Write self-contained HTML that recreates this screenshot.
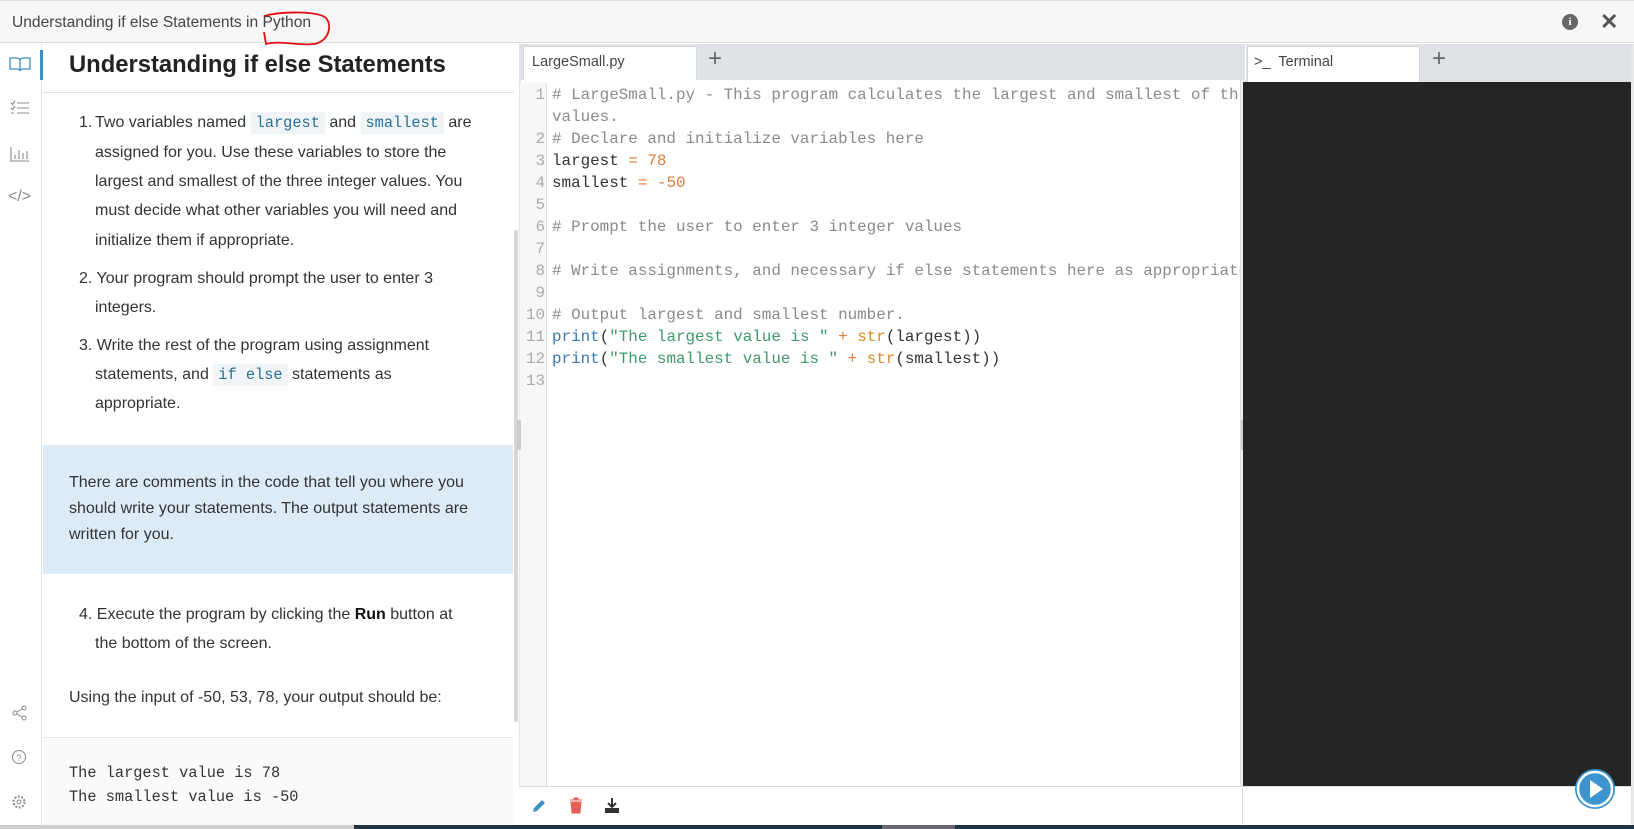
<!DOCTYPE html>
<html><head><meta charset="utf-8"><style>
*{margin:0;padding:0;box-sizing:border-box}
body{width:1634px;height:829px;overflow:hidden;background:#fff;font-family:"Liberation Sans",sans-serif;color:#333;position:relative}
.a{position:absolute}
.mono{font-family:"Liberation Mono",monospace}
.t{font-size:16px;color:#333;white-space:nowrap}
code.c{font-family:"Liberation Mono",monospace;background:#f1f4f6;color:#2a6f97;padding:2px 5px;font-size:15.3px}
.ln{position:absolute;left:0;width:25px;text-align:right;color:#aaa}
.cl{position:absolute;left:32px;white-space:pre;color:#333}
.cm{color:#8a8a8a}.nu{color:#e07a3a}.pr{color:#3a78ad}.st{color:#3e9a6a}.fn{color:#d98a2b}
</style></head><body>
<div class="a" style="left:0;top:0;width:1634px;height:43px;background:#f7f7f7;border-top:1px solid #ddd;border-bottom:1px solid #ddd"></div>
<div class="a t" style="left:12px;top:14px;font-size:15.6px;color:#444">Understanding if else Statements in Python</div>
<svg class="a" style="left:258px;top:8px" width="76" height="40"><path d="M6 8 C25 3 60 3 68 10 C75 18 70 34 56 36 C40 38 22 32 8 36 L6 24" fill="none" stroke="#e01010" stroke-width="1.8"/></svg>
<div class="a" style="left:1562px;top:14px;width:16px;height:16px;border-radius:50%;background:#666;color:#fff;font:bold 11px 'Liberation Serif',serif;text-align:center;line-height:16px">i</div>
<div class="a" style="left:1600px;top:9px;font:bold 22px 'Liberation Sans',sans-serif;color:#555">✕</div>

<div class="a" style="left:0;top:44px;width:42px;height:785px;background:#fff;border-right:1px solid #e5e5e5"></div>
<div class="a" style="left:40px;top:50px;width:3px;height:30px;background:#3d8fc6"></div>
<svg class="a" style="left:9px;top:56px" width="22" height="16"><path d="M1 2h7c1.5 0 3 1 3 2.5V15c0-1-1.5-2-3-2H1zM21 2h-7c-1.5 0-3 1-3 2.5V15c0-1 1.5-2 3-2h7z" fill="none" stroke="#3d8fc6" stroke-width="1.3"/></svg>
<svg class="a" style="left:10px;top:100px" width="20" height="16"><path d="M7 3h12M7 8h12M7 13h12M1 3l1.5 1.5L5 1M1 8l1.5 1.5L5 6M1 13h3" fill="none" stroke="#888" stroke-width="1.1"/></svg>
<svg class="a" style="left:10px;top:146px" width="20" height="16"><path d="M1 1v14h18M5 13V9M9 13V4M13 13V7M17 13V5" fill="none" stroke="#888" stroke-width="1.1"/></svg>
<div class="a" style="left:8px;top:188px;font-size:16px;color:#888">&lt;/&gt;</div>
<svg class="a" style="left:12px;top:705px" width="16" height="16"><circle cx="3" cy="8" r="2" fill="none" stroke="#888"/><circle cx="12" cy="3" r="2" fill="none" stroke="#888"/><circle cx="12" cy="13" r="2" fill="none" stroke="#888"/><path d="M5 7l5-3M5 9l5 3" stroke="#888"/></svg>
<svg class="a" style="left:11px;top:749px" width="16" height="16"><circle cx="8" cy="8" r="6.5" fill="none" stroke="#888"/><text x="8" y="12" font-size="9" text-anchor="middle" fill="#888" font-family="Liberation Sans">?</text></svg>
<svg class="a" style="left:11px;top:794px" width="16" height="16"><circle cx="8" cy="8" r="5.5" fill="none" stroke="#888" stroke-dasharray="2 1.5" stroke-width="2"/><circle cx="8" cy="8" r="2" fill="none" stroke="#888"/></svg>

<div class="a" style="left:43px;top:44px;width:471px;height:49px;border-bottom:1px solid #e3e3e3"></div>
<div class="a" style="left:69px;top:51px;font-size:23.8px;font-weight:bold;color:#222;white-space:nowrap">Understanding if else Statements</div>
<div class="a t" style="left:79px;top:114px">1.</div>
<div class="a t" style="left:95px;top:114px">Two variables named <code class="c">largest</code> and <code class="c">smallest</code> are</div>
<div class="a t" style="left:95px;top:144px">assigned for you. Use these variables to store the</div>
<div class="a t" style="left:95px;top:173px">largest and smallest of the three integer values. You</div>
<div class="a t" style="left:95px;top:202px">must decide what other variables you will need and</div>
<div class="a t" style="left:95px;top:232px">initialize them if appropriate.</div>
<div class="a t" style="left:79px;top:270px">2. Your program should prompt the user to enter 3</div>
<div class="a t" style="left:95px;top:299px">integers.</div>
<div class="a t" style="left:79px;top:337px">3. Write the rest of the program using assignment</div>
<div class="a t" style="left:95px;top:366px">statements, and <code class="c">if else</code> statements as</div>
<div class="a t" style="left:95px;top:395px">appropriate.</div>
<div class="a" style="left:43px;top:445px;width:470px;height:129px;background:#dcebf6"></div>
<div class="a t" style="left:69px;top:474px">There are comments in the code that tell you where you</div>
<div class="a t" style="left:69px;top:500px">should write your statements. The output statements are</div>
<div class="a t" style="left:69px;top:526px">written for you.</div>
<div class="a t" style="left:79px;top:606px">4. Execute the program by clicking the <b style="color:#111">Run</b> button at</div>
<div class="a t" style="left:95px;top:635px">the bottom of the screen.</div>
<div class="a t" style="left:69px;top:689px">Using the input of -50, 53, 78, your output should be:</div>
<div class="a" style="left:43px;top:737px;width:470px;height:92px;background:#fafafa;border-top:1px solid #e6e6e6"></div>
<div class="a mono" style="left:69px;top:761px;font-size:15.3px;color:#333;line-height:24px;white-space:pre">The largest value is 78
The smallest value is -50</div>
<div class="a" style="left:514px;top:230px;width:4px;height:492px;background:#d6d6d6;border-radius:2px"></div>

<div class="a" style="left:519px;top:44px;width:726px;height:36px;background:#dfe3e8"></div>
<div class="a" style="left:523px;top:46px;width:174px;height:34px;background:#fff;border:1px solid #d8d8d8;border-bottom:none;border-radius:3px 3px 0 0"></div>
<div class="a t" style="left:532px;top:54px;font-size:14.5px;color:#444">LargeSmall.py</div>
<div class="a" style="left:708px;top:45px;font-size:24px;color:#666;font-weight:300">+</div>
<div class="a" style="left:519px;top:80px;width:2px;height:707px;background:#e6e6e6"></div>
<div class="a" style="left:520px;top:83px;width:27px;height:704px;background:#f7f7f7;border-right:1px solid #ddd"></div>
<div class="a mono" style="left:520px;top:83px;width:720px;height:704px;font-size:15.9px;line-height:22px;overflow:hidden">
<div style="position:relative;top:1px">
<div class="ln" style="top:0">1</div><div class="cl cm" style="top:0"># LargeSmall.py - This program calculates the largest and smallest of three</div>
<div class="cl cm" style="top:22px">values.</div>
<div class="ln" style="top:44px">2</div><div class="cl cm" style="top:44px"># Declare and initialize variables here</div>
<div class="ln" style="top:66px">3</div><div class="cl" style="top:66px">largest <span class="nu">=</span> <span class="nu">78</span></div>
<div class="ln" style="top:88px">4</div><div class="cl" style="top:88px">smallest <span class="nu">=</span> <span class="nu">-50</span></div>
<div class="ln" style="top:110px">5</div>
<div class="ln" style="top:132px">6</div><div class="cl cm" style="top:132px"># Prompt the user to enter 3 integer values</div>
<div class="ln" style="top:154px">7</div>
<div class="ln" style="top:176px">8</div><div class="cl cm" style="top:176px"># Write assignments, and necessary if else statements here as appropriate</div>
<div class="ln" style="top:198px">9</div>
<div class="ln" style="top:220px">10</div><div class="cl cm" style="top:220px"># Output largest and smallest number.</div>
<div class="ln" style="top:242px">11</div><div class="cl" style="top:242px"><span class="pr">print</span>(<span class="st">"The largest value is "</span> <span class="nu">+</span> <span class="fn">str</span>(largest))</div>
<div class="ln" style="top:264px">12</div><div class="cl" style="top:264px"><span class="pr">print</span>(<span class="st">"The smallest value is "</span> <span class="nu">+</span> <span class="fn">str</span>(smallest))</div>
<div class="ln" style="top:286px">13</div>
</div></div>
<div class="a" style="left:1240px;top:80px;width:6px;height:707px;background:#f0f0f0;border-left:1px solid #ddd;border-right:1px solid #ddd"></div>
<div class="a" style="left:1241px;top:420px;width:4px;height:30px;background:#ccc"></div>
<div class="a" style="left:517px;top:420px;width:4px;height:30px;background:#ccc"></div>

<div class="a" style="left:519px;top:786px;width:1112px;height:43px;background:#fff;border-top:1px solid #ddd"></div>
<div class="a" style="left:1242px;top:786px;width:1px;height:43px;background:#ddd"></div>
<svg class="a" style="left:531px;top:798px" width="16" height="16"><path d="M2 14l1-4 8-8 3 3-8 8z" fill="#3d8fc6"/></svg>
<svg class="a" style="left:569px;top:797px" width="14" height="17"><path d="M1 3h12M5 3V1h4v2M2 5h10l-1 11H3z" fill="#e3605a" stroke="#e3605a"/></svg>
<svg class="a" style="left:604px;top:797px" width="16" height="17"><path d="M8 1v9M4 6l4 4 4-4" stroke="#333" stroke-width="2" fill="none"/><path d="M1 11v5h14v-5" fill="#333"/></svg>

<div class="a" style="left:1246px;top:44px;width:385px;height:38px;background:#dfe3e8"></div>
<div class="a" style="left:1247px;top:46px;width:173px;height:36px;background:#fff;border-radius:3px 3px 0 0;border:1px solid #d8d8d8;border-bottom:none"></div>
<div class="a t" style="left:1254px;top:54px;font-size:14.5px;color:#444">&gt;_&nbsp; Terminal</div>
<div class="a" style="left:1432px;top:45px;font-size:24px;color:#666">+</div>
<div class="a" style="left:1243px;top:82px;width:388px;height:704px;background:#252525"></div>
<div class="a" style="left:1631px;top:44px;width:3px;height:785px;background:#e8e8e8"></div>
<div class="a" style="left:1575px;top:769px;width:40px;height:40px;border-radius:50%;background:#3d94cf"></div>
<svg class="a" style="left:1575px;top:769px" width="40" height="40"><circle cx="20" cy="20" r="17" fill="none" stroke="#fff" stroke-width="2.5"/><path d="M15 11l13 9-13 9z" fill="#fff"/></svg>

<div class="a" style="left:0;top:825px;width:354px;height:4px;background:#cfcfcf"></div>
<div class="a" style="left:354px;top:825px;width:1280px;height:4px;background:#1f3340"></div>
<div class="a" style="left:882px;top:825px;width:73px;height:4px;background:#667"></div>
</body></html>
